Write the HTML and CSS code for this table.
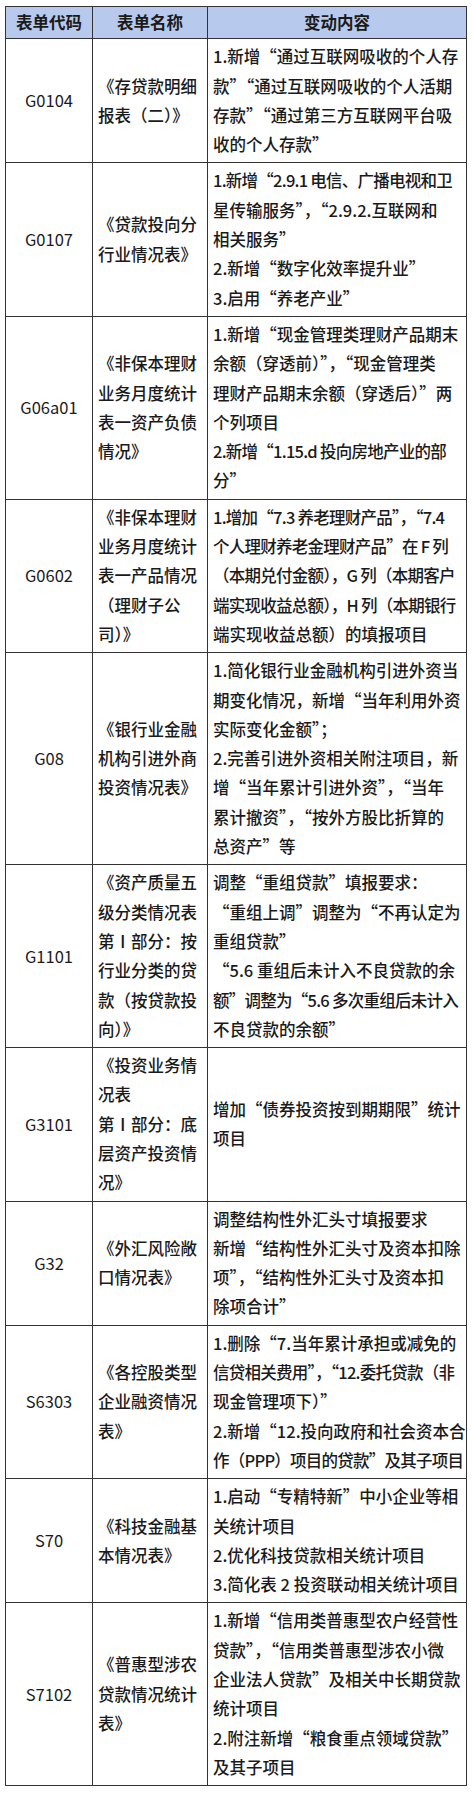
FILE: index.html
```html
<!DOCTYPE html>
<html lang="zh-CN">
<head>
<meta charset="utf-8">
<title>表单变动</title>
<link rel="stylesheet" href="styles.css">
</head>
<body>
<table class="changes">
  <colgroup>
    <col class="c-code">
    <col class="c-name">
    <col class="c-desc">
  </colgroup>
  <thead>
    <tr>
      <th>表单代码</th>
      <th>表单名称</th>
      <th>变动内容</th>
    </tr>
  </thead>
  <tbody>
    <tr>
      <td class="code">G0104</td>
      <td class="name">《存贷款明细<br>报表（二）》</td>
      <td class="desc">1.新增“通过互联网吸收的个人存<br>款”“通过互联网吸收的个人活期<br>存款”“通过第三方互联网平台吸<br>收的个人存款”</td>
    </tr>
    <tr>
      <td class="code">G0107</td>
      <td class="name">《贷款投向分<br>行业情况表》</td>
      <td class="desc"><span class="fit">1.新增“2.9.1 电信、广播电视和卫</span><br>星传输服务”，“2.9.2.互联网和<br>相关服务”<br>2.新增“数字化效率提升业”<br>3.启用“养老产业”</td>
    </tr>
    <tr>
      <td class="code">G06a01</td>
      <td class="name">《非保本理财<br>业务月度统计<br>表一资产负债<br>情况》</td>
      <td class="desc">1.新增“现金管理类理财产品期末<br>余额（穿透前）”，“现金管理类<br>理财产品期末余额（穿透后）”两<br>个列项目<br><span class="fit">2.新增“1.15.d 投向房地产业的部</span><br>分”</td>
    </tr>
    <tr>
      <td class="code">G0602</td>
      <td class="name">《非保本理财<br>业务月度统计<br>表一产品情况<br>（理财子公<br>司）》</td>
      <td class="desc"><span class="fit">1.增加“7.3 养老理财产品”，“7.4</span><br><span class="fit">个人理财养老金理财产品”在 F 列</span><br><span class="fit">（本期兑付金额），G 列（本期客户</span><br><span class="fit">端实现收益总额），H 列（本期银行</span><br>端实现收益总额）的填报项目</td>
    </tr>
    <tr>
      <td class="code">G08</td>
      <td class="name">《银行业金融<br>机构引进外商<br>投资情况表》</td>
      <td class="desc">1.简化银行业金融机构引进外资当<br>期变化情况，新增“当年利用外资<br>实际变化金额”；<br>2.完善引进外资相关附注项目，新<br>增“当年累计引进外资”，“当年<br>累计撤资”，“按外方股比折算的<br>总资产”等</td>
    </tr>
    <tr>
      <td class="code">G1101</td>
      <td class="name">《资产质量五<br>级分类情况表<br>第Ⅰ部分：按<br>行业分类的贷<br>款（按贷款投<br>向）》</td>
      <td class="desc">调整“重组贷款”填报要求：<br>“重组上调”调整为“不再认定为<br>重组贷款”<br>“5.6 重组后未计入不良贷款的余<br><span class="fit">额”调整为“5.6 多次重组后未计入</span><br>不良贷款的余额”</td>
    </tr>
    <tr>
      <td class="code">G3101</td>
      <td class="name">《投资业务情<br>况表<br>第Ⅰ部分：底<br>层资产投资情<br>况》</td>
      <td class="desc">增加“债券投资按到期期限”统计<br>项目</td>
    </tr>
    <tr>
      <td class="code">G32</td>
      <td class="name">《外汇风险敞<br>口情况表》</td>
      <td class="desc">调整结构性外汇头寸填报要求<br>新增“结构性外汇头寸及资本扣除<br>项”，“结构性外汇头寸及资本扣<br>除项合计”</td>
    </tr>
    <tr>
      <td class="code">S6303</td>
      <td class="name">《各控股类型<br>企业融资情况<br>表》</td>
      <td class="desc">1.删除“7.当年累计承担或减免的<br><span class="fit">信贷相关费用”，“12.委托贷款（非</span><br>现金管理项下）”<br>2.新增“12.投向政府和社会资本合<br><span class="fit">作（PPP）项目的贷款”及其子项目</span></td>
    </tr>
    <tr>
      <td class="code">S70</td>
      <td class="name">《科技金融基<br>本情况表》</td>
      <td class="desc">1.启动“专精特新”中小企业等相<br>关统计项目<br>2.优化科技贷款相关统计项目<br>3.简化表 2 投资联动相关统计项目</td>
    </tr>
    <tr>
      <td class="code">S7102</td>
      <td class="name">《普惠型涉农<br>贷款情况统计<br>表》</td>
      <td class="desc">1.新增“信用类普惠型农户经营性<br>贷款”，“信用类普惠型涉农小微<br>企业法人贷款”及相关中长期贷款<br>统计项目<br>2.附注新增“粮食重点领域贷款”<br>及其子项目</td>
    </tr>
  </tbody>
</table>
</body>
</html>
```

FILE: styles.css
```css
html, body {
  background: #ffffff;
}

body {
  margin: 6px 0 0 5px;
  font-family: "Noto Sans CJK SC", "Noto Sans", sans-serif;
  color: #1a1a1a;
}

.changes {
  border-collapse: collapse;
  table-layout: fixed;
  width: 461px;
  font-size: 16.5px;
  line-height: 29.3px;
  font-weight: 500;
}

.c-code { width: 87px; }
.c-name { width: 115px; }
.c-desc { width: 259px; }

.changes th,
.changes td {
  border: 1px solid #333333;
  vertical-align: middle;
  white-space: nowrap;
  overflow: hidden;
}

.changes th {
  background: #b7c9ec;
  font-weight: 700;
  text-align: center;
  padding: 1px 0;
}

.changes td {
  padding: 3px 5px;
}

.code {
  text-align: center;
  font-weight: 400;
}

.name {
  text-align: left;
}

.desc {
  text-align: left;
}

.fit {
  letter-spacing: -0.75px;
}
```
